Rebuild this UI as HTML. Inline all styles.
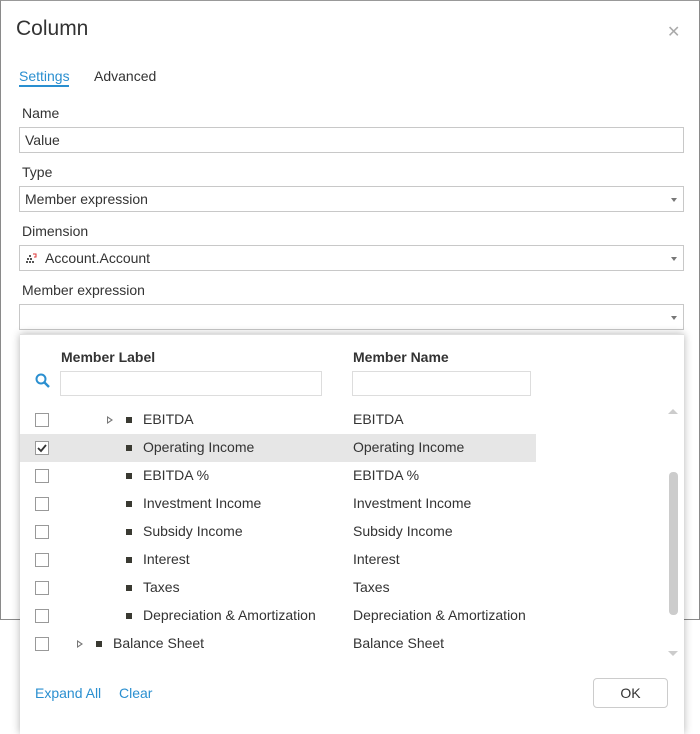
<!DOCTYPE html>
<html><head><style>
*{box-sizing:border-box;margin:0;padding:0}
body{width:700px;height:723px;background:#fff;font-family:"Liberation Sans",sans-serif;color:#333;font-size:14px;position:relative;overflow:hidden}
.a{position:absolute;white-space:nowrap}
.dlg{position:absolute;left:0;top:0;width:700px;height:620px;border:1px solid #8a8a8a;border-top-color:#999}
.inp{position:absolute;left:19px;width:665px;height:26px;border:1px solid #c8c8c8;background:#fff}
.inp span{position:absolute;left:5px;top:4px}
.dd:after{content:"";position:absolute;right:6px;top:11px;border-left:3.5px solid transparent;border-right:3.5px solid transparent;border-top:4px solid #777}
.lbl{position:absolute;left:22px}
.pop{position:absolute;left:20px;top:334px;width:664px;height:400px;background:#fff;box-shadow:0 0 8px rgba(0,0,0,.3);border-top:1px solid #e0e0e0}
.cb{position:absolute;left:15px;width:14px;height:14px;border:1px solid #999;background:#fff}
.bl{position:absolute;width:6px;height:6px;background:#3a3a32}
.tri{position:absolute;width:0;height:0;border-top:4px solid transparent;border-bottom:4px solid transparent;border-left:6px solid #777}
.tri:after{content:"";position:absolute;left:-5px;top:-2px;border-top:2px solid transparent;border-bottom:2px solid transparent;border-left:3px solid #fff}
</style></head><body>
<div class="dlg"></div>
<div class="a" style="left:16px;top:17px;font-size:21px;color:#333">Column</div>
<div class="a" style="left:667px;top:22px;font-size:16px;color:#aaa">✕</div>
<div class="a" style="left:19px;top:68px;color:#2a8fd0">Settings</div>
<div class="a" style="left:19px;top:85px;width:50px;height:2px;background:#2a8fd0"></div>
<div class="a" style="left:94px;top:68px">Advanced</div>
<div class="lbl a" style="top:105px">Name</div>
<div class="inp" style="top:127px"><span>Value</span></div>
<div class="lbl a" style="top:164px">Type</div>
<div class="inp dd" style="top:186px"><span>Member expression</span></div>
<div class="lbl a" style="top:223px">Dimension</div>
<div class="inp dd" style="top:245px"><span style="left:25px">Account.Account</span>
<svg style="position:absolute;left:6px;top:7px" width="12" height="11"><rect x="3" y="2" width="2" height="2" fill="#555"/><rect x="1" y="5" width="2" height="2" fill="#555"/><rect x="4" y="5" width="2" height="2" fill="#555"/><rect x="0" y="8" width="2" height="2" fill="#555"/><rect x="3" y="8" width="2" height="2" fill="#555"/><rect x="6" y="8" width="2" height="2" fill="#555"/><path d="M7 1h3v3h-2" stroke="#d33" fill="none"/></svg></div>
<div class="lbl a" style="top:282px">Member expression</div>
<div class="inp dd" style="top:304px"></div>
<div class="pop">
<div class="a" style="left:41px;top:14px;font-weight:bold">Member Label</div>
<div class="a" style="left:333px;top:14px;font-weight:bold">Member Name</div>
<svg class="a" style="left:15px;top:38px" width="16" height="16"><circle cx="6" cy="6" r="4.5" stroke="#2a8fd0" stroke-width="2" fill="none"/><path d="M9.5 9.5l4.5 4.5" stroke="#2a8fd0" stroke-width="2.4"/></svg>
<div class="a" style="left:40px;top:36px;width:262px;height:25px;border:1px solid #ddd"></div>
<div class="a" style="left:332px;top:36px;width:179px;height:25px;border:1px solid #ddd"></div>
<div class="a" style="left:0;top:99px;width:516px;height:28px;background:#e6e6e6"></div>
<div class="cb" style="top:78px"></div><div class="tri" style="left:87px;top:81px"></div><div class="bl" style="left:106px;top:82px"></div><div class="a" style="left:123px;top:76px">EBITDA</div><div class="a" style="left:333px;top:76px">EBITDA</div>
<div class="cb" style="top:106px"><svg width="12" height="12" style="position:absolute;left:0;top:0"><path d="M2 6l3 3 5-6" stroke="#333" stroke-width="1.8" fill="none"/></svg></div><div class="bl" style="left:106px;top:110px"></div><div class="a" style="left:123px;top:104px">Operating Income</div><div class="a" style="left:333px;top:104px">Operating Income</div>
<div class="cb" style="top:134px"></div><div class="bl" style="left:106px;top:138px"></div><div class="a" style="left:123px;top:132px">EBITDA %</div><div class="a" style="left:333px;top:132px">EBITDA %</div>
<div class="cb" style="top:162px"></div><div class="bl" style="left:106px;top:166px"></div><div class="a" style="left:123px;top:160px">Investment Income</div><div class="a" style="left:333px;top:160px">Investment Income</div>
<div class="cb" style="top:190px"></div><div class="bl" style="left:106px;top:194px"></div><div class="a" style="left:123px;top:188px">Subsidy Income</div><div class="a" style="left:333px;top:188px">Subsidy Income</div>
<div class="cb" style="top:218px"></div><div class="bl" style="left:106px;top:222px"></div><div class="a" style="left:123px;top:216px">Interest</div><div class="a" style="left:333px;top:216px">Interest</div>
<div class="cb" style="top:246px"></div><div class="bl" style="left:106px;top:250px"></div><div class="a" style="left:123px;top:244px">Taxes</div><div class="a" style="left:333px;top:244px">Taxes</div>
<div class="cb" style="top:274px"></div><div class="bl" style="left:106px;top:278px"></div><div class="a" style="left:123px;top:272px">Depreciation &amp; Amortization</div><div class="a" style="left:333px;top:272px">Depreciation &amp; Amortization</div>
<div class="cb" style="top:302px"></div><div class="tri" style="left:57px;top:305px"></div><div class="bl" style="left:76px;top:306px"></div><div class="a" style="left:93px;top:300px">Balance Sheet</div><div class="a" style="left:333px;top:300px">Balance Sheet</div>
<div class="a" style="left:648px;top:74px;border-left:5px solid transparent;border-right:5px solid transparent;border-bottom:5px solid #ccc"></div>
<div class="a" style="left:649px;top:137px;width:9px;height:143px;background:#ccc;border-radius:4px"></div>
<div class="a" style="left:648px;top:316px;border-left:5px solid transparent;border-right:5px solid transparent;border-top:5px solid #ccc"></div>
<div class="a" style="left:15px;top:350px;color:#2a8fd0">Expand All</div>
<div class="a" style="left:99px;top:350px;color:#2a8fd0">Clear</div>
<div class="a" style="left:573px;top:343px;width:75px;height:30px;border:1px solid #ccc;border-radius:4px;text-align:center;line-height:28px">OK</div>
</div>
</body></html>
